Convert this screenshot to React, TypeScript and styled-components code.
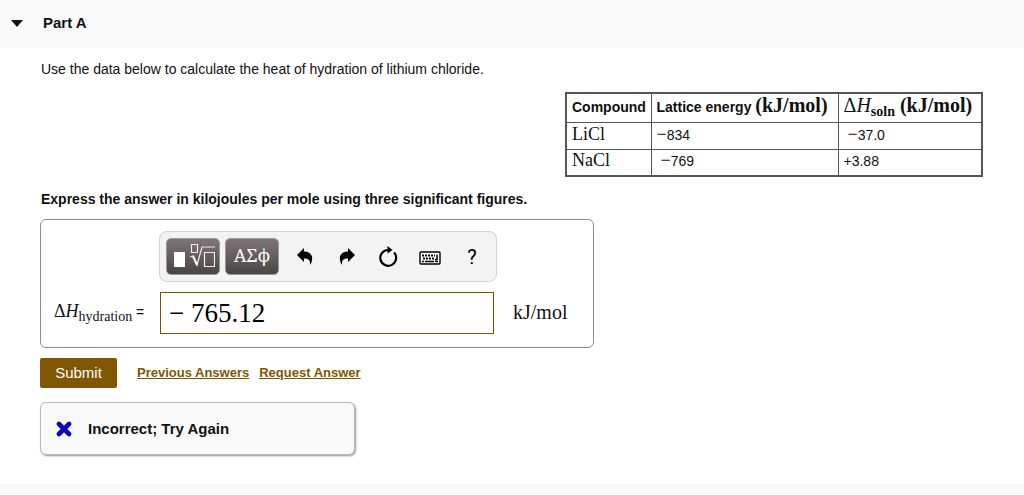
import React, { useState } from "react";
import styled, { createGlobalStyle } from "styled-components";

const sans = `"Liberation Sans", Arial, sans-serif`;
const serif = `"Liberation Serif", "Times New Roman", serif`;

const GlobalStyle = createGlobalStyle`
  *, *::before, *::after { box-sizing: border-box; }
  body {
    margin: 0;
    background: #fff;
    color: #111;
    font: 14px/18px ${sans};
  }
  button, input { font: inherit; color: inherit; }
`;

const PartHeader = styled.header`
  background: #f9f9f9;
  padding: 13px 11px 15px;
`;

const PartToggle = styled.button`
  display: flex;
  align-items: center;
  gap: 20px;
  padding: 0;
  height: 20px;
  border: 0;
  background: none;
  font-size: 15px;
  font-weight: bold;
  cursor: pointer;
`;

const Content = styled.main`
  padding: 12px 41px 29px 40px;
`;

const Paragraph = styled.p<{ $strong?: boolean }>`
  margin: 0;
  padding-left: 1px;
  line-height: 18px;
  font-weight: ${(p) => (p.$strong ? "bold" : "normal")};
`;

const DataTable = styled.table`
  margin: 14px 0 13px auto;
  border-collapse: collapse;
  border: 2px solid #555;
`;

const Cell = styled.td<{ $width?: number; $indent?: boolean }>`
  width: ${(p) => (p.$width ? `${p.$width}px` : "auto")};
  height: 27px;
  padding: 0 4px 2px ${(p) => (p.$indent ? 9 : 5)}px;
  border: 1px solid #555;
  text-align: left;
  white-space: nowrap;
  line-height: 18px;
`;

const HeadCell = styled(Cell)`
  height: 29px;
`;

const Formula = styled.span<{ $size?: number }>`
  font-family: ${serif};
  font-size: ${(p) => p.$size ?? 18}px;
  line-height: 16px;
  white-space: nowrap;

  sub {
    font-size: 14px;
    line-height: 0;
    vertical-align: -4px;
  }
`;

const Regular = styled.span`
  font-weight: normal;
`;

const AnswerBox = styled.section`
  display: grid;
  grid-template-columns: 106px minmax(0, 1fr) 80px;
  row-gap: 10px;
  align-items: center;
  max-width: 554px;
  margin-top: 11px;
  padding: 11px 19px 13px 13px;
  border: 1px solid #8c8c8c;
  border-radius: 6px;
`;

const Toolbar = styled.div`
  grid-column: 2;
  display: flex;
  align-items: center;
  margin-left: -1px;
  margin-right: -3px;
  height: 51px;
  padding: 0 3px 0 6px;
  border: 1px solid #d2d2d2;
  border-radius: 8px;
  background: #f3f3f3;
`;

const PaletteButton = styled.button`
  display: flex;
  align-items: center;
  justify-content: center;
  width: 54px;
  height: 37px;
  margin-right: 5px;
  padding: 0 0 4px;
  border: 1px solid #999;
  border-radius: 5px;
  background: linear-gradient(#807578, #484545);
  color: #fff;
  font-family: "Noto Serif", ${serif};
  font-size: 18px;
`;

const ToolButton = styled.button`
  flex: 1;
  display: flex;
  align-items: center;
  justify-content: center;
  height: 36px;
  padding: 0;
  border: 0;
  background: none;
  color: #000;
  font-family: Roboto, ${sans};
  font-size: 20px;
`;

const AnswerLabel = styled.label`
  grid-column: 1;
  padding-bottom: 3px;
  white-space: nowrap;
`;

const AnswerInput = styled.input`
  width: 100%;
  height: 42px;
  padding: 0 8px;
  border: 1px solid #7a5600;
  border-radius: 0;
  outline: 0;
  background: #fff;
  color: #000;
  font-family: ${serif};
  font-size: 27px;
`;

const Unit = styled(Formula)`
  padding: 0 0 3px 19px;
`;

const Actions = styled.div`
  display: flex;
  align-items: center;
  margin-top: 10px;
`;

const SubmitButton = styled.button`
  width: 77px;
  height: 30px;
  margin-right: 20px;
  padding: 0;
  border: 0;
  border-radius: 2px;
  background: #7f5700;
  color: #fff;
  font-size: 15px;
`;

const ActionLink = styled.a`
  margin-right: 10px;
  color: #7f5700;
  font-size: 13px;
  font-weight: bold;
  text-decoration: underline;
`;

const Feedback = styled.div`
  display: flex;
  align-items: center;
  gap: 16px;
  max-width: 315px;
  height: 53px;
  margin-top: 14px;
  padding: 1px 16px 0 15px;
  border: 1px solid #b8b8b8;
  border-radius: 6px;
  background: #f9f9f9;
  box-shadow: 1px 1px 2px #999;
  font-size: 15px;
  font-weight: bold;
`;

const Footer = styled.footer`
  height: 11px;
  background: #f9f9f9;
`;

const UndoIcon = () => (
  <svg width="16" height="18" viewBox="0 0 16 18" aria-hidden="true">
    <path d="M0 7 7 0v3.500c6 0 9 4 8 8.500-.3 2-1 4-2 5 .5-4-1-6.500-6-6.500V14Z" fill="currentColor" />
  </svg>
);

const RedoIcon = () => (
  <svg width="16" height="18" viewBox="0 0 16 18" aria-hidden="true">
    <path d="M16 7 9 0v3.500C3 3.500 0 7.500 1 12c.3 2 1 4 2 5-.5-4 1-6.500 6-6.500V14Z" fill="currentColor" />
  </svg>
);

const ResetIcon = () => (
  <svg width="20" height="22" viewBox="0 0 20 22" aria-hidden="true">
    <path d="M10.500 4A7.900 7.900 0 1 0 16 6.500" fill="none" stroke="currentColor" strokeWidth="2.200" />
    <path d="M9.500 0 14.500 4 9.500 7.500Z" fill="currentColor" />
  </svg>
);

const KeyboardIcon = () => (
  <svg width="22" height="16" viewBox="0 0 22 16" aria-hidden="true">
    <rect x="1" y="3" width="20" height="12" rx="1" fill="#fff" stroke="currentColor" strokeWidth="1.400" />
    <path d="M3 6.500h13M4 9.500h12" stroke="currentColor" strokeWidth="1.800" strokeDasharray="2 1" />
    <path d="M3 12.500h2M6 12.500h9M16 12.500h3M18 5.500v5h-2" fill="none" stroke="currentColor" strokeWidth="1.500" />
  </svg>
);

const TemplateIcon = () => (
  <svg width="44" height="28" viewBox="0 0 44 28" aria-hidden="true">
    <path d="M3 11h11v15H3Z" fill="#fff" />
    <path
      d="M20.500 3.500h6v8h-6ZM19 16l3-1 4 9 5-18h13M33.500 11.500h10v14h-10Z"
      fill="none"
      stroke="#eee"
      strokeWidth="1.200"
    />
    <path d="m22 15 4 9" stroke="#fff" strokeWidth="2" />
  </svg>
);

const CrossIcon = () => (
  <svg width="16" height="16" viewBox="0 0 16 16" aria-hidden="true">
    <path d="M3 3l10 10M13 3 3 13" stroke="#0808b8" strokeWidth="4.600" strokeLinecap="round" />
  </svg>
);

export default function App() {
  const [answer, setAnswer] = useState("\u2212 765.12");

  return (
    <>
      <GlobalStyle />
      <PartHeader>
        <PartToggle type="button" aria-expanded="true">
          <svg width="12" height="7" viewBox="0 0 12 7" aria-hidden="true">
            <path d="M0 0h12L6 7Z" fill="#111" />
          </svg>
          Part A
        </PartToggle>
      </PartHeader>
      <Content>
        <Paragraph>Use the data below to calculate the heat of hydration of lithium chloride.</Paragraph>
        <DataTable>
          <thead>
            <tr>
              <HeadCell as="th" scope="col" $width={85}>Compound</HeadCell>
              <HeadCell as="th" scope="col" $width={187}>
                Lattice energy <Formula $size={20}>(kJ/mol)</Formula>
              </HeadCell>
              <HeadCell as="th" scope="col" $width={144}>
                <Formula $size={20}>
                  <Regular>Δ<i>H</i></Regular>
                  <sub>soln</sub> (kJ/mol)
                </Formula>
              </HeadCell>
            </tr>
          </thead>
          <tbody>
            <tr>
              <Cell><Formula>LiCl</Formula></Cell>
              <Cell><Formula>−</Formula>834</Cell>
              <Cell $indent><Formula>−</Formula>37.0</Cell>
            </tr>
            <tr>
              <Cell><Formula>NaCl</Formula></Cell>
              <Cell $indent><Formula>−</Formula>769</Cell>
              <Cell>+3.88</Cell>
            </tr>
          </tbody>
        </DataTable>
        <Paragraph $strong>Express the answer in kilojoules per mole using three significant figures.</Paragraph>
        <AnswerBox>
          <Toolbar role="toolbar" aria-label="Equation tools">
            <PaletteButton type="button" aria-label="Templates"><TemplateIcon /></PaletteButton>
            <PaletteButton type="button">ΑΣϕ</PaletteButton>
            <ToolButton type="button" aria-label="Undo"><UndoIcon /></ToolButton>
            <ToolButton type="button" aria-label="Redo"><RedoIcon /></ToolButton>
            <ToolButton type="button" aria-label="Reset"><ResetIcon /></ToolButton>
            <ToolButton type="button" aria-label="Keyboard shortcuts"><KeyboardIcon /></ToolButton>
            <ToolButton type="button">?</ToolButton>
          </Toolbar>
          <AnswerLabel htmlFor="answer">
            <Formula>Δ<i>H</i><sub>hydration</sub></Formula> =
          </AnswerLabel>
          <AnswerInput id="answer" value={answer} onChange={(e) => setAnswer(e.target.value)} />
          <Unit $size={20}>kJ/mol</Unit>
        </AnswerBox>
        <Actions>
          <SubmitButton type="button">Submit</SubmitButton>
          <ActionLink href="#previous">Previous Answers</ActionLink>
          <ActionLink href="#request">Request Answer</ActionLink>
        </Actions>
        <Feedback role="status">
          <CrossIcon />
          Incorrect; Try Again
        </Feedback>
      </Content>
      <Footer />
    </>
  );
}
